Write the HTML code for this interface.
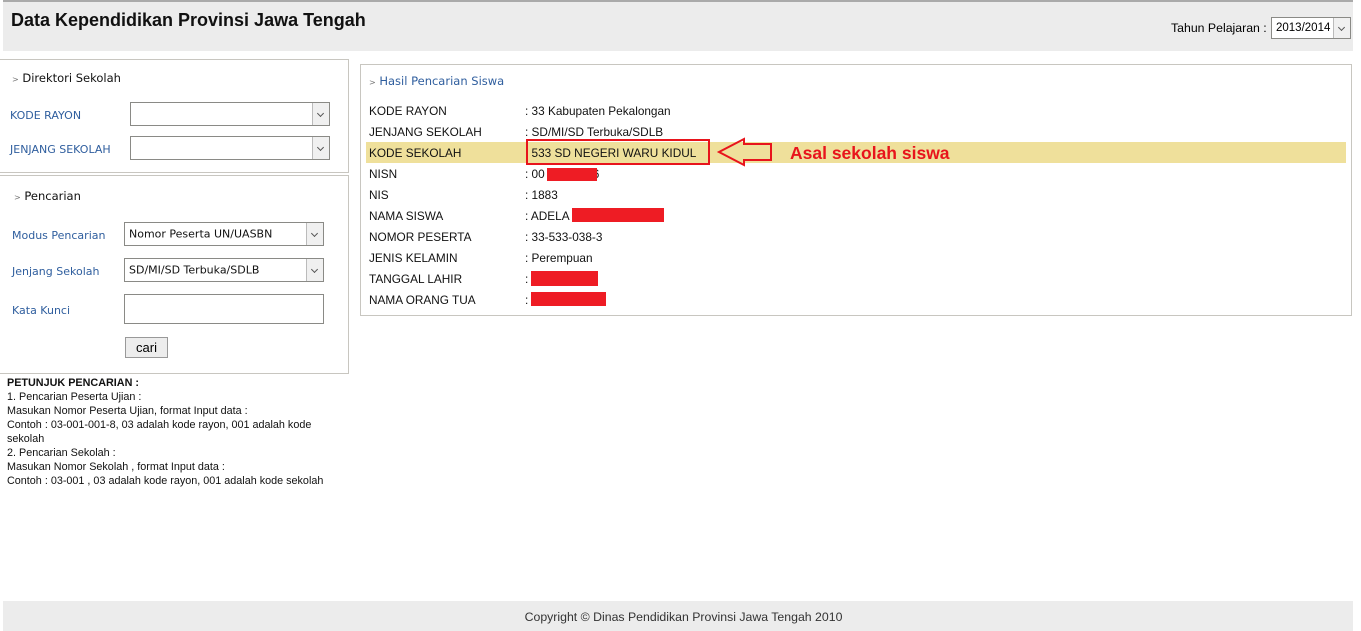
<!DOCTYPE html>
<html><head><meta charset="utf-8"><style>
body{margin:0;width:1361px;height:631px;position:relative;background:#fff;font-family:"Liberation Sans",Arial,sans-serif;font-size:12px;color:#000;overflow:hidden}
.a{position:absolute;white-space:nowrap}
.v{font-family:"DejaVu Sans",Verdana,sans-serif;font-size:11px}
.blue{color:#2f5e9e}
.panel{position:absolute;border:1px solid #c8c6c0;background:#fff}
.sel{position:absolute;border:1px solid #8a8a86;background:#fff;box-sizing:border-box}
.sel .b{position:absolute;right:0;top:0;bottom:0;width:16px;background:#f0f0f0;border-left:1px solid #bbb}
.sel .b:after{content:"";position:absolute;left:5px;top:50%;margin-top:-3px;width:4px;height:4px;border-right:1.5px solid #555;border-bottom:1.5px solid #555;transform:rotate(45deg)}
.sel span{position:absolute;left:4px;top:50%;transform:translateY(-50%)}
.r{position:absolute;font-size:11.8px;color:#111}
.red{position:absolute;background:#ee1c24}
</style></head><body>
<div class="a" style="left:3px;top:0;width:1350px;height:51px;background:#ececec;border-top:2px solid #aaa;box-sizing:border-box"></div>
<div class="a" style="left:11px;top:10px;font-size:18px;font-weight:bold;color:#111">Data Kependidikan Provinsi Jawa Tengah</div>
<div class="a" style="left:1171px;top:21px;font-size:12.3px">Tahun Pelajaran :</div>
<div class="sel" style="left:1271px;top:17px;width:80px;height:22px"><span style="font-size:11.5px">2013/2014</span><div class="b"></div></div>

<div class="panel" style="left:-1px;top:59px;width:348px;height:112px"></div>
<div class="a v" style="left:12px;top:71px;color:#111;font-size:11.5px"><span style="font-size:8px;color:#777">&gt;</span> Direktori Sekolah</div>
<div class="a v blue" style="left:10px;top:109px">KODE RAYON</div>
<div class="sel" style="left:130px;top:102px;width:200px;height:24px"><div class="b"></div></div>
<div class="a v blue" style="left:10px;top:143px">JENJANG SEKOLAH</div>
<div class="sel" style="left:130px;top:136px;width:200px;height:24px"><div class="b"></div></div>

<div class="panel" style="left:-1px;top:175px;width:348px;height:197px"></div>
<div class="a v" style="left:14px;top:189px;font-size:11.5px;color:#111"><span style="font-size:8px;color:#777">&gt;</span> Pencarian</div>
<div class="a v blue" style="left:12px;top:229px">Modus Pencarian</div>
<div class="sel" style="left:124px;top:222px;width:200px;height:24px"><span class="v" style="color:#111">Nomor Peserta UN/UASBN</span><div class="b"></div></div>
<div class="a v blue" style="left:12px;top:265px">Jenjang Sekolah</div>
<div class="sel" style="left:124px;top:258px;width:200px;height:24px"><span class="v" style="color:#111">SD/MI/SD Terbuka/SDLB</span><div class="b"></div></div>
<div class="a v blue" style="left:12px;top:304px">Kata Kunci</div>
<div class="sel" style="left:124px;top:294px;width:200px;height:30px"></div>
<div class="a" style="left:125px;top:337px;width:43px;height:21px;border:1px solid #999;background:#ededed;box-sizing:border-box;text-align:center;line-height:19px;font-size:13px">cari</div>

<div class="a" style="left:7px;top:376px;font-size:10.8px;line-height:14px;color:#111"><b>PETUNJUK PENCARIAN :</b><br>1. Pencarian Peserta Ujian :<br>Masukan Nomor Peserta Ujian, format Input data :<br>Contoh : 03-001-001-8, 03 adalah kode rayon, 001 adalah kode<br>sekolah<br>2. Pencarian Sekolah :<br>Masukan Nomor Sekolah , format Input data :<br>Contoh : 03-001 , 03 adalah kode rayon, 001 adalah kode sekolah</div>

<div class="panel" style="left:360px;top:64px;width:990px;height:250px"></div>
<div class="a v blue" style="left:369px;top:74px;font-size:11.5px"><span style="font-size:8px;color:#777">&gt;</span> Hasil Pencarian Siswa</div>
<div class="a" style="left:366px;top:142px;width:980px;height:21px;background:#efe09b"></div>

<div class="r" style="left:369px;top:104px">KODE RAYON</div><div class="r" style="left:525px;top:104px">: 33 Kabupaten Pekalongan</div>
<div class="r" style="left:369px;top:125px">JENJANG SEKOLAH</div><div class="r" style="left:525px;top:125px">: SD/MI/SD Terbuka/SDLB</div>
<div class="r" style="left:369px;top:146px">KODE SEKOLAH</div><div class="r" style="left:525px;top:146px">: 533 SD NEGERI WARU KIDUL</div>
<div class="r" style="left:369px;top:167px">NISN</div><div class="r" style="left:525px;top:167px">: 00<span style="display:inline-block;width:48px"></span>6</div>
<div class="red" style="left:547px;top:168px;width:50px;height:13px"></div>
<div class="r" style="left:369px;top:188px">NIS</div><div class="r" style="left:525px;top:188px">: 1883</div>
<div class="r" style="left:369px;top:209px">NAMA SISWA</div><div class="r" style="left:525px;top:209px">: ADELA</div>
<div class="red" style="left:572px;top:208px;width:92px;height:14px"></div>
<div class="r" style="left:369px;top:230px">NOMOR PESERTA</div><div class="r" style="left:525px;top:230px">: 33-533-038-3</div>
<div class="r" style="left:369px;top:251px">JENIS KELAMIN</div><div class="r" style="left:525px;top:251px">: Perempuan</div>
<div class="r" style="left:369px;top:272px">TANGGAL LAHIR</div><div class="r" style="left:525px;top:272px">:</div>
<div class="red" style="left:531px;top:271px;width:67px;height:15px"></div>
<div class="r" style="left:369px;top:293px">NAMA ORANG TUA</div><div class="r" style="left:525px;top:293px">:</div>
<div class="red" style="left:531px;top:292px;width:75px;height:14px"></div>

<div class="a" style="left:526px;top:139px;width:184px;height:26px;border:2px solid #e8141c;box-sizing:border-box"></div>
<svg class="a" style="left:716px;top:136px" width="60" height="32"><polygon points="3,16 28,3 28,8 55,8 55,24 28,24 28,29" fill="none" stroke="#e8141c" stroke-width="2"/></svg>
<div class="a" style="left:790px;top:143px;font-size:17.5px;font-weight:bold;color:#e8141c">Asal sekolah siswa</div>

<div class="a" style="left:3px;top:601px;width:1350px;height:30px;background:#ececec"></div>
<div class="a" style="left:0;width:1367px;top:610px;text-align:center;font-size:12.3px;color:#333">Copyright © Dinas Pendidikan Provinsi Jawa Tengah 2010</div>
</body></html>
